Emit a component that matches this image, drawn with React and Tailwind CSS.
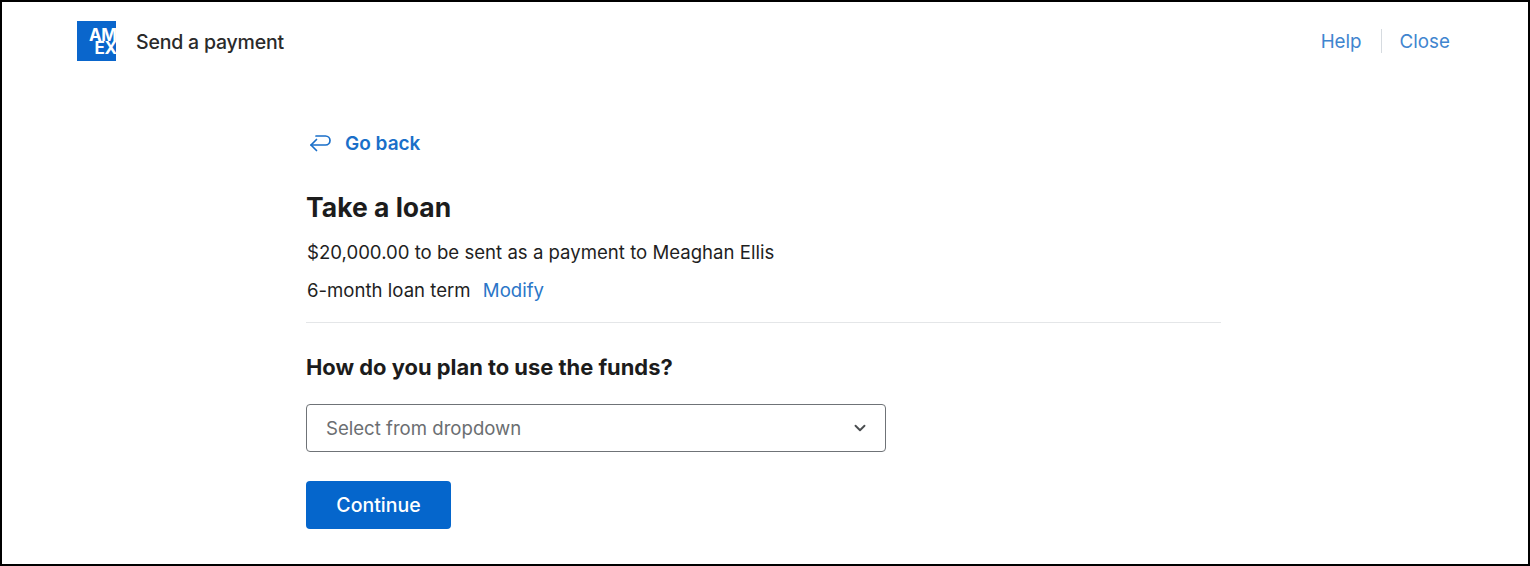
import React from "react";
import { ChevronDown } from "lucide-react";

const font = { fontFamily: "Inter, 'Liberation Sans', sans-serif" };

const Logo = () => (
  <svg width="39" height="40" viewBox="0 0 39 40" className="block shrink-0">
    <rect width="39" height="40" fill="#0a66cc" />
    <text x="39.500" y="20" textAnchor="end" fill="#fff" fontSize="17" fontWeight="700" letterSpacing="-0.5">AM</text>
    <text x="39.500" y="33" textAnchor="end" fill="#fff" fontSize="17" fontWeight="700" letterSpacing="-0.5">EX</text>
  </svg>
);

const App = () => {
  return (
    <div style={font} className="h-[566px] border-2 border-black bg-white text-[#1f1f1f] overflow-hidden">
      {/* Header */}
      <div className="flex items-center justify-between pl-[75px] pr-[78px] pt-[19px]">
        <div className="flex items-center gap-[20px]">
          <Logo />
          <span className="text-[19.5px] font-medium tracking-[-0.2px] text-[#2a2a2a] pt-[3px]">Send a payment</span>
        </div>
        <div className="flex items-center text-[18.8px] text-[#3f85cf]">
          <a className="pt-[3px]">Help</a>
          <div className="w-px h-[24px] bg-[#d6dbe0] ml-[19px] mr-[18px]"></div>
          <a className="pt-[3px]">Close</a>
        </div>
      </div>

      {/* Content */}
      <div className="ml-[304px] w-[915px] mt-[69px]">
        <a className="flex items-center gap-[14px] text-[#1a6fc9] font-semibold text-[19px] leading-[28px]">
          <svg width="25" height="20" viewBox="0 0 25 20" fill="none" stroke="currentColor" strokeWidth="1.7" strokeLinecap="round" strokeLinejoin="round">
            <path d="M10 2h9.500a4.500 4.500 0 0 1 0 9H5" />
            <path d="M10.500 5.500L5 11l5.500 5.500" />
          </svg>
          Go back
        </a>

        <h1 className="text-[26.5px] font-bold leading-[34px] mt-[32px] text-[#1c1c1c]">Take a loan</h1>
        <p className="text-[18.6px] leading-[26px] mt-[15px] ml-[1px]">$20,000.00 to be sent as a payment to Meaghan Ellis</p>
        <p className="text-[18.6px] leading-[26px] mt-[12px] ml-[1px]">
          6-month loan term <a className="text-[#2a76c8] ml-[7px]">Modify</a>
        </p>
        <div className="h-px bg-[#e4e6e8] mt-[19px]"></div>

        <h2 className="text-[21.900px] font-bold leading-[28px] mt-[30px] text-[#1c1c1c]">How do you plan to use the funds?</h2>

        <div className="mt-[23px] w-[580px] h-[48px] border border-[#6f7377] rounded-[4px] flex items-center justify-between pl-[19px] pr-[16px]">
          <span className="text-[18.6px] text-[#6b6e71] pt-[1px]">Select from dropdown</span>
          <ChevronDown className="w-[18px] h-[18px] text-[#4a4d50]" strokeWidth={2.5} />
        </div>

        <button className="mt-[29px] w-[145px] h-[48px] pt-[2px] bg-[#0566cc] rounded-[4px] text-white text-[19.5px] font-medium">
          Continue
        </button>
      </div>
    </div>
  );
};

export default App;
